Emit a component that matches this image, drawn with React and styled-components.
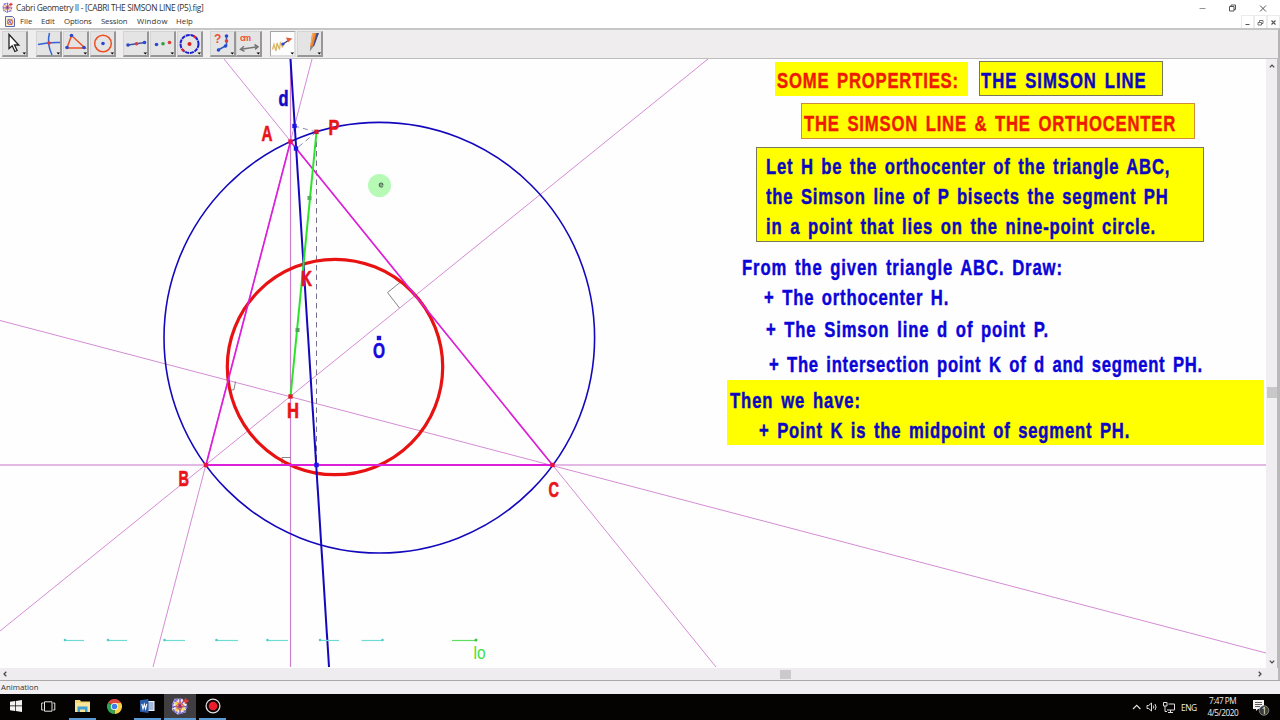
import React, { useLayoutEffect, useRef, useState } from "react";
import styled, { createGlobalStyle } from "styled-components";

const Global = createGlobalStyle`
  * { box-sizing: border-box; }
  body { margin: 0; overflow: hidden; background: #fff; }
  #root { width: 1280px; height: 720px; }
`;

const Screen = styled.div`
  width: 1280px;
  height: 720px;
  display: flex;
  flex-direction: column;
  font-family: "Open Sans", "Noto Sans", sans-serif;
  font-size: 8px;
  color: #333;
  overflow: hidden;
`;

/* ---------- text that keeps a given advance width ---------- */
const FitBox = styled.span`
  display: block;
  white-space: pre;
  width: ${(p) => p.$w}px;
  flex: none;
`;
const FitInner = styled.span`
  display: inline-block;
  transform-origin: 0 50%;
`;
function Fit({ w, squeeze = 1, children }) {
  const ref = useRef(null);
  const [spacing, setSpacing] = useState(0);
  useLayoutEffect(() => {
    const natural = ref.current.offsetWidth;
    setSpacing((w / squeeze - natural) / (String(children).length - 1));
  }, []);
  return (
    <FitBox $w={w}>
      <FitInner ref={ref} style={{ letterSpacing: spacing, transform: `scaleX(${squeeze})` }}>
        {children}
      </FitInner>
    </FitBox>
  );
}

/* ---------- window chrome ---------- */
const TitleBar = styled.header`
  height: 15px;
  display: flex;
  align-items: center;
  justify-content: space-between;
  padding: 0 11px 0 2px;
  font-size: 8.4px;
  line-height: 14px;
  flex: none;
`;
const MenuBar = styled.nav`
  height: 13px;
  display: flex;
  align-items: center;
  justify-content: space-between;
  padding: 0 0 0 5px;
  line-height: 13px;
  font-size: 7.8px;
  flex: none;
`;
const Group = styled.div`
  display: flex;
  align-items: center;
  gap: ${(p) => p.$gap || 0}px;
`;
const Menus = styled(Group)`
  padding-left: 5px;
`;
const ChildButton = styled.div`
  width: 13px;
  height: 13px;
  border: 1px solid #ececec;
  border-bottom: 0;
  display: flex;
  align-items: center;
  justify-content: center;
`;
const Toolbar = styled.div`
  height: 31px;
  flex: none;
  display: flex;
  padding: 1px 0 0 2px;
  background: #efedee;
  border-top: 2px solid #c6c6c6;
  border-bottom: 1px solid #bdbdbd;
  border-right: 2px solid #b4b4b4;
`;
const ToolButton = styled.div`
  position: relative;
  width: 26px;
  height: 26px;
  margin-left: ${(p) => p.$gap}px;
  flex: none;
  background: ${(p) => (p.$active ? "#fdfdfd" : "#e4e4e4")};
  border: 1px solid ${(p) => (p.$active ? "#a5a5a5" : "#d4d4d4")};
  border-right: 2px solid ${(p) => (p.$active ? "#dedede" : "#979797")};
  border-bottom: 2px solid ${(p) => (p.$active ? "#dedede" : "#979797")};
  svg { display: block; }
`;

/* ---------- workspace ---------- */
const Workspace = styled.main`
  height: 609px;
  flex: none;
  display: flex;
`;
const Canvas = styled.div`
  position: relative;
  width: 1266px;
  height: 609px;
  background: #fefefe;
  overflow: hidden;
  font-family: "Liberation Sans", Arial, sans-serif;
`;
const Figure = styled.svg`
  display: block;
`;
const VScroll = styled.div`
  width: 14px;
  display: flex;
  flex-direction: column;
  align-items: center;
  justify-content: space-between;
  padding: 5px 0 4px;
  background: #f0eef0;
  border-right: 3px solid #b9b9b9;
`;
const VThumb = styled.div`
  width: 10px;
  height: 11px;
  margin-top: 57px;
  background: #c8c8c8;
`;
const HScroll = styled.div`
  height: 12px;
  flex: none;
  display: flex;
  align-items: center;
  justify-content: space-between;
  padding: 0 16px 0 3px;
  background: #eeecee;
  border-right: 2px solid #b9b9b9;
`;
const HThumb = styled.div`
  width: 11px;
  height: 9px;
  margin-left: 305px;
  background: #cbc9cb;
`;
const StatusBar = styled.footer`
  height: 14px;
  flex: none;
  padding-left: 1px;
  line-height: 12px;
  font-size: 7.8px;
  background: #f1eff1;
  border-top: 1px solid #a9a9a9;
`;

/* ---------- notes on the canvas ---------- */
const Note = styled.div`
  position: absolute;
  left: ${(p) => p.$x}px;
  top: ${(p) => p.$y}px;
  width: ${(p) => p.$w}px;
  height: ${(p) => p.$h}px;
  padding: ${(p) => p.$pad || "4px 0 0 2px"};
  background: ${(p) => (p.$plain ? "transparent" : "#ffff00")};
  border: ${(p) => (p.$line ? `1px solid ${p.$line}` : "0")};
  color: ${(p) => p.$color || "#0d08c0"};
  font-weight: bold;
  font-size: 22.5px;
  line-height: 30px;
  word-spacing: 3px;
  -webkit-text-stroke: 0.45px currentColor;
`;
const Indent = styled.div`
  padding-left: ${(p) => p.$by}px;
`;

/* ---------- taskbar ---------- */
const Taskbar = styled.div`
  height: 26px;
  flex: none;
  display: flex;
  justify-content: space-between;
  background: #050301;
  color: #eee;
`;
const Task = styled.div`
  width: ${(p) => p.$w}px;
  height: 26px;
  display: flex;
  align-items: center;
  justify-content: center;
  background: ${(p) => (p.$active ? "#403e40" : "transparent")};
  border-bottom: 2px solid ${(p) => (p.$open ? "#5b9bd5" : "transparent")};
  margin-left: ${(p) => p.$gap || 0}px;
  svg { display: block; }
`;
const Tray = styled.div`
  display: flex;
  align-items: center;
  padding-right: 10px;
`;
const Language = styled.div`
  margin-left: 5px;
  font-size: 8.4px;
`;
const Clock = styled.div`
  width: 44px;
  display: flex;
  flex-direction: column;
  align-items: center;
  line-height: 12px;
  font-size: 8.2px;
  margin: 0 7px 0 4px;
`;

const Atom = ({ size }) => (
  <svg width={size} height={size} viewBox="0 0 16 16" fill="none">
    <path d="M3 1.500h7l4 5-1 7-7 2-5-4 .5-6z" fill="#f1ecf8" />
    <path d="M8 1v14M1 8.500h14M3 2.500l10 11M12 3L2.500 13.500" stroke="#6a5ccc" strokeWidth="1.200" />
    <path d="M4 2.500l-2.500 4 1 5.500 4.500 2.800 5.500-1.500 1.500-5M4 2.500l5-.5" stroke="#7d70d6" strokeWidth="1.500" strokeDasharray="2.200 .8" />
    <path d="M8 4.500l3.500 3.500-3.500 4-3.500-4z" stroke="#e06a3a" strokeWidth="1.200" />
    <circle cx="4.700" cy="5.500" r="1.400" fill="#f7cf4a" />
    <circle cx="10.800" cy="10.800" r="1.500" fill="#f2e36a" />
    <circle cx="4.700" cy="11.500" r="1.400" fill="#f7cf4a" />
    <circle cx="8" cy="8" r="1.500" fill="#b52447" />
    <path d="M13 1v5M10.500 3.500h5" stroke="#e03a3a" strokeWidth="1.700" />
  </svg>
);

const Drop = () => <path d="M19.500 20.500h3.600L21.300 22.600z" fill="#000" />;
const dot = (x, y, c, r = 1.8) => <circle cx={x} cy={y} r={r} fill={c} />;

const TOOLS = [
  [0, <path d="M6 2.500v14l3.200-2.800 2.700 5.800 2.200-1-2.600-5.500h4.300z" fill="#fff" stroke="#222" strokeWidth="1.300" />],
  [8, <g fill="none"><path d="M12.500 1c-2 7-1.200 14 2.500 22M1 12.500C8 11 15 10 23 10.500" stroke="#2f63d8" strokeWidth="1.500" />{dot(12, 11, "#e23a3a")}</g>],
  [1, <g><path d="M7.500 3.500L3 16h18z" fill="none" stroke="#ee4f22" strokeWidth="1.500" />{dot(7.5, 3.5, "#2949d0")}{dot(3, 15.5, "#2949d0")}{dot(20, 15.5, "#2949d0")}</g>],
  [1, <g><circle cx="12" cy="11.500" r="8.300" fill="none" stroke="#ee4f22" strokeWidth="1.500" />{dot(12, 11.5, "#2949d0")}</g>],
  [7, <g><path d="M4 13l17-2.500" stroke="#3b4fa8" strokeWidth="1.300" />{dot(4, 13, "#2949d0")}{dot(12.5, 11.8, "#e23a3a")}{dot(20.5, 10.5, "#2949d0")}</g>],
  [1, <g>{dot(5.5, 12.5, "#2949d0")}{dot(12, 11.8, "#2ca03a")}{dot(18.5, 10.5, "#e23a3a")}</g>],
  [1, <g><circle cx="11.500" cy="12" r="9" fill="none" stroke="#1a1ed0" strokeWidth="2" strokeDasharray="4 .8" /><path d="M15.500 4l2.500 1.700M4 17l2 2.300" stroke="#ee2020" strokeWidth="2.200" />{dot(11.5, 12, "#dd2020", 2)}</g>],
  [7, <g><text x="3" y="11" fontSize="12" fontWeight="bold" fontFamily="Liberation Sans" fill="#ee4f32">?</text><path d="M15.500 3.500v10L7 18" fill="none" stroke="#315ac2" strokeWidth="1.500" />{dot(15.5, 4, "#2949d0")}{dot(15.5, 9, "#e23a3a")}{dot(14.5, 14, "#2949d0")}{dot(7.5, 18, "#2949d0")}</g>],
  [0, <g><text x="3" y="8.500" fontSize="8.500" fontWeight="bold" fontFamily="Liberation Sans" fill="#ee4f32" textLength="11">cm</text><path d="M4 17.200L20 14.800M7 14.300l-3.500 3 4 2M17.500 12.500l3.500 2.300-3 2.500" fill="none" stroke="#777" strokeWidth="1.500" /></g>],
  [8, <g fill="none"><path d="M1.500 17.500l1.500-5 2 6.500 1-8 2.500 6.500 1-7.500 2 5.500 .5-4" stroke="#dcb768" strokeWidth="1.300" /><path d="M12 12l6-4" stroke="#4b3a78" strokeWidth="1.300" /><path d="M14.800 5.500l6.700 1-4.300 3.800z" fill="#e25a36" />{dot(12, 12, "#2949d0", 1.6)}</g>],
  [1, <g><path d="M14.200 1h6.500l-5 13.500-3.500 .5z" fill="#ef812f" /><path d="M18.500 1h2.500l-4.800 13-1.200.3z" fill="#364b92" /><path d="M14.200 1h1.800l-3 13-.9.500z" fill="#f6a55c" /><path d="M12.500 14l-.7 5.500 4-5.500z" fill="#8c8178" /></g>],
];

const FAINT = "#cf7fcf";
const MAG = "#dc1fd8";
const BLUE = "#1408bc";
const RED = "#e81418";
const Dot = ({ x, y, c }) => <rect x={x - 2.2} y={y - 2.2} width="4.400" height="4.400" fill={c} />;
const MARKS = [[64, 84], [107, 127], [163.5, 185], [215.5, 238], [266.5, 288], [319, 339]];
const NAMES = [
  ["A", 261.5, 140.5, 11, RED], ["P", 328.5, 134.5, 11, RED], ["K", 301, 286, 11, RED],
  ["H", 287, 417.5, 12, RED], ["B", 178.5, 485.5, 10.5, RED], ["C", 548.5, 496.5, 10.5, RED],
  ["d", 278.5, 106, 10, "#1408c6"], ["O", 373, 357.5, 12, "#1408e0"],
];

function Drawing() {
  return (
    <Figure width="1266" height="609" viewBox="0 59 1266 609" fill="none">
      <g stroke={FAINT} strokeWidth=".9">
        <path d="M0 465H1266" strokeWidth="1.300" stroke="#dba0dc" />
        <path d="M290.500 59V667" strokeWidth="1.200" />
        <path d="M312 59L153 667M224 59L716 667M0 631L708 59M0 320.500L1266 653" />
      </g>
      <g stroke="#777" strokeWidth=".9">
        <path d="M400 282.500L387.500 292.500 399.500 308M229 391l5-1.500 1.500-8M282 465v-7.500h8.500" />
        <path d="M316.500 132V465" stroke="#666080" strokeDasharray="5.500 4" />
        <path d="M316.500 132L294.500 126M316.500 132L296 149" stroke="#857ba0" strokeDasharray="5 4" />
      </g>
      <circle cx="379.300" cy="337.700" r="215.300" stroke={BLUE} strokeWidth="1.600" />
      <circle cx="335" cy="367" r="107.700" stroke="#e81212" strokeWidth="3.200" />
      <path d="M290.500 59L329 667" stroke={BLUE} strokeWidth="2" />
      <path d="M290.500 141.500L206 465M290.500 141.500L552.500 465" stroke={MAG} strokeWidth="1.700" />
      <path d="M206 465H552.500" stroke={MAG} strokeWidth="2" />
      <path d="M316.500 132L290.500 396.500" stroke="#2ae32a" strokeWidth="2" />
      <rect x="307.500" y="196" width="4" height="4" fill="#4fb058" />
      <rect x="295.500" y="328" width="4" height="4" fill="#4fa058" />
      <Dot x={290.5} y={141.5} c="#ee1450" />
      <Dot x={206} y={465} c="#e81444" />
      <Dot x={552.5} y={465} c="#e81444" />
      <Dot x={290.5} y={396.5} c="#e02020" />
      <Dot x={316.5} y={131.8} c="#cf1c30" />
      <Dot x={294.5} y={126} c="#1a14e8" />
      <Dot x={296} y={148.5} c="#1a14e8" />
      <Dot x={316.5} y={465} c="#1a14e8" />
      <Dot x={379} y={338} c="#1a10d8" />
      <g stroke="#6fdbd6" strokeWidth="1.200">
        {MARKS.map(([a, b]) => (
          <g key={a}><path d={`M${a} 640.500H${b}`} /><circle cx={a + 1} cy="640" r="1.300" fill="#4fcfc8" stroke="none" /></g>
        ))}
        <path d="M361.500 640.500H383" />
        <circle cx="382.500" cy="640" r="1.300" fill="#4fcfc8" stroke="none" />
      </g>
      <path d="M452 640.500H476" stroke="#5fdc62" strokeWidth="1.200" />
      <circle cx="476" cy="640" r="1.500" fill="#35c63a" />
      <circle cx="379.500" cy="185.500" r="11.500" fill="#b6fab6" />
      <path d="M379.500 185h3.400c0-2.600-3.600-2.600-3.600 0 0 2.500 2.800 2.300 3.500 1.300" stroke="#57705a" strokeWidth="1.200" />
      <g fontFamily="Liberation Sans" fontWeight="bold" fontSize="22">
        {NAMES.map(([t, x, y, w, c]) => (
          <text key={t} x={x} y={y} fill={c} stroke={c} strokeWidth=".6" textLength={w} lengthAdjust="spacingAndGlyphs">{t}</text>
        ))}
      </g>
      <text x="473.500" y="659" fontFamily="Liberation Sans" fontSize="18" fill="#3ce03c" textLength="12" lengthAdjust="spacingAndGlyphs">lo</text>
    </Figure>
  );
}

const S = 0.74;

export default function App() {
  return (
    <Screen>
      <Global />
      <TitleBar>
        <Group $gap={3}>
          <Atom size={11} />
          <Fit w={188}>Cabri Geometry II - [CABRI THE SIMSON LINE (P5).fig]</Fit>
        </Group>
        <svg width="72" height="12" viewBox="0 0 72 12" fill="none" stroke="#444" strokeWidth=".9">
          <path d="M2.500 6.500h6" stroke="#888" />
          <path d="M32.500 4.500h4.500v4.500h-4.500zM34 4.500V3h4.500v4.500H37" />
          <path d="M63 3.500l6 6M69 3.500l-6 6" />
        </svg>
      </TitleBar>
      <MenuBar>
        <Group>
          <svg width="10" height="11" viewBox="0 0 10 11" fill="none">
            <path d="M.5 .5h7l2 2v8h-9z" fill="#f5ecd8" stroke="#5d66b0" />
            <circle cx="5" cy="6" r="2.500" stroke="#e17a3c" strokeWidth="1.200" />
            <path d="M3 3l4 6M7 3.500L2.500 8" stroke="#6f62c4" />
          </svg>
          <Menus $gap={9}>
            <Fit w={12}>File</Fit>
            <Fit w={14}>Edit</Fit>
            <Fit w={28}>Options</Fit>
            <Fit w={27}>Session</Fit>
            <Fit w={30}>Window</Fit>
            <Fit w={17}>Help</Fit>
          </Menus>
        </Group>
        <Group>
          <ChildButton><svg width="7" height="7"><path d="M1.500 5.500h4" stroke="#555" /></svg></ChildButton>
          <ChildButton><svg width="7" height="7" fill="none" stroke="#666" strokeWidth=".9"><path d="M1 3.500h3.500V6H1zM2.500 3.500v-2H6v3H4.500" /></svg></ChildButton>
          <ChildButton><svg width="7" height="7" stroke="#555" strokeWidth="1.100"><path d="M1.500 1.500l4 4M5.500 1.500l-4 4" /></svg></ChildButton>
        </Group>
      </MenuBar>
      <Toolbar>
        {TOOLS.map(([gap, art], i) => (
          <ToolButton key={i} $gap={gap} $active={i === 9}>
            <svg width="24" height="24" viewBox="0 0 24 24">{art}<Drop /></svg>
          </ToolButton>
        ))}
      </Toolbar>
      <Workspace>
        <Canvas>
          <Drawing />
          <Note $x={775} $y={3} $w={193} $h={34} $color="#ee1a05"><Fit w={181} squeeze={S}>SOME PROPERTIES:</Fit></Note>
          <Note $x={979} $y={2} $w={184} $h={35} $line="#77775a" $pad="4px 0 0 1px"><Fit w={165} squeeze={S}>THE SIMSON LINE</Fit></Note>
          <Note $x={801} $y={44} $w={394} $h={36} $line="#d08a3c" $color="#ee1a05" $pad="5px 0 0 2px"><Fit w={371} squeeze={S}>THE SIMSON LINE & THE ORTHOCENTER</Fit></Note>
          <Note $x={756} $y={88} $w={448} $h={95} $line="#77775a" $pad="4px 0 0 9px">
            <Fit w={403} squeeze={S}>Let H be the orthocenter of the triangle ABC,</Fit>
            <Fit w={402} squeeze={S}>the Simson line of P bisects the segment PH</Fit>
            <Fit w={389} squeeze={S}>in a point that lies on the nine-point circle.</Fit>
          </Note>
          <Note $plain $x={742} $y={194} $w={330} $h={60} $pad="0" $color="#0b04d8">
            <Fit w={320} squeeze={S}>From the given triangle ABC. Draw:</Fit>
            <Indent $by={22}><Fit w={184} squeeze={S}>+ The orthocenter H.</Fit></Indent>
          </Note>
          <Note $plain $x={766} $y={256} $w={290} $h={30} $pad="0" $color="#0b04d8"><Fit w={282} squeeze={S}>+ The Simson line d of point P.</Fit></Note>
          <Note $plain $x={769} $y={291} $w={440} $h={30} $pad="0" $color="#0b04d8"><Fit w={433} squeeze={S}>+ The intersection point K of d and segment PH.</Fit></Note>
          <Note $x={727} $y={321} $w={537} $h={65} $pad="6px 0 0 3px">
            <Fit w={130} squeeze={S}>Then we have:</Fit>
            <Indent $by={29}><Fit w={370} squeeze={S}>+ Point K is the midpoint of segment PH.</Fit></Indent>
          </Note>
        </Canvas>
        <VScroll>
          <svg width="6" height="4" fill="none" stroke="#444" strokeWidth="1.200"><path d="M.8 3.300L3 1l2.200 2.300" /></svg>
          <VThumb />
          <svg width="6" height="4" fill="none" stroke="#444" strokeWidth="1.200"><path d="M.8 .7L3 3 5.200 .7" /></svg>
        </VScroll>
      </Workspace>
      <HScroll>
        <svg width="4" height="6" fill="none" stroke="#444" strokeWidth="1.200"><path d="M3.300 .8L1 3l2.300 2.200" /></svg>
        <HThumb />
        <svg width="4" height="6" fill="none" stroke="#444" strokeWidth="1.200"><path d="M.7 .8L3 3 .7 5.200" /></svg>
      </HScroll>
      <StatusBar><Fit w={37}>Animation</Fit></StatusBar>
      <Taskbar>
        <Group>
          <Task $w={32}>
            <svg width="12" height="12" fill="#f2f2f2"><path d="M0 1.800L5 1v4.600H0zM5.700.9L12 0v5.600H5.700zM0 6.300h5V11l-5-.8zM5.700 6.300H12V12l-6.300-.9z" /></svg>
          </Task>
          <Task $w={32}>
            <svg width="15" height="11" fill="none" stroke="#e4e4e4"><path d="M3.500.8h7.500v9.400H3.500zM2.500 2H.7v7h1.800M12.200 2h1.600v7h-1.600" /></svg>
          </Task>
          <Task $w={27} $gap={5} $open>
            <svg width="15" height="14"><path d="M0 1h5l1 1.500h9V13H0z" fill="#f4d878" /><path d="M0 4h15v9H0z" fill="#f8e599" /><path d="M2.500 7.500h10V13H10v-2.500H5V13H2.500z" fill="#3fa0d8" /></svg>
          </Task>
          <Task $w={32} $gap={2}>
            <svg width="15" height="15" viewBox="0 0 15 15">
              <path d="M7.500 7.500L1 3.750A7.500 7.500 0 0 1 14 3.750z" fill="#dd4b3e" />
              <path d="M7.500 7.500L14 3.750A7.500 7.500 0 0 1 7.500 15z" fill="#f8cf45" />
              <path d="M7.500 7.500L7.500 15A7.500 7.500 0 0 1 1 3.750z" fill="#2fa556" />
              <path d="M7.500 4H14.100l-3.500 3.500-2 6z" fill="#f8cf45" /><path d="M7.500 4.100H14.100L13.500 2.900 7.500 2z" fill="#dd4b3e" />
              <circle cx="7.500" cy="7.500" r="3.600" fill="#fff" /><circle cx="7.500" cy="7.500" r="2.800" fill="#3f7fe8" />
            </svg>
          </Task>
          <Task $w={27} $gap={4} $open>
            <svg width="15" height="14"><path d="M7 2h7.500v10H7z" fill="#f2f5fa" /><path d="M8 4h5.500M8 6h5.500M8 8h5.500M8 10h5.500" stroke="#4773b4" strokeWidth=".9" /><path d="M0 1.300L8.500 0v14L0 12.700z" fill="#2b5ca8" /><path d="M1.800 4.800l1.200 5 1.300-4.500 1.300 4.500 1.200-5" fill="none" stroke="#fff" strokeWidth="1.100" /></svg>
          </Task>
          <Task $w={32} $gap={3} $open $active><Atom size={18} /></Task>
          <Task $w={27} $gap={3} $open>
            <svg width="16" height="16"><circle cx="8" cy="8" r="6.900" fill="#120506" stroke="#dedede" strokeWidth="1.300" /><circle cx="8" cy="8" r="4.300" fill="#ee1c2c" /></svg>
          </Task>
        </Group>
        <Tray>
          <svg width="46" height="14" viewBox="0 0 46 14" fill="none" stroke="#ddd">
            <path d="M3 9l3.700-3.700L10.400 9" strokeWidth="1.200" />
            <path d="M17 5.500h1.700L21.500 3v8l-2.800-2.500H17zM23.300 5.500q1.200 1.500 0 3M25 4q2.200 3 0 6" />
            <path d="M38.500 4h6v6h-7.500M38 12.500h5M40.500 10v2.500M33.500 2.500h3.500v3.500h-3.500zM35 6v5.500h2" />
          </svg>
          <Language><Fit w={16}>ENG</Fit></Language>
          <Clock><Fit w={28}>7:47 PM</Fit><Fit w={31}>4/5/2020</Fit></Clock>
          <svg width="18" height="18" viewBox="0 0 18 18">
            <path d="M1 2h11v9H6l-2 2v-2H1z" fill="#f5f5f5" /><path d="M3 4.500h7M3 6.500h7M3 8.500h5" stroke="#333" strokeWidth=".8" />
            <circle cx="12" cy="12.500" r="4.800" fill="#3a3a3a" stroke="#999" strokeWidth=".8" />
            <text x="9.700" y="15.500" fontSize="8.500" fill="#fff" fontFamily="Open Sans">1</text>
          </svg>
        </Tray>
      </Taskbar>
    </Screen>
  );
}
